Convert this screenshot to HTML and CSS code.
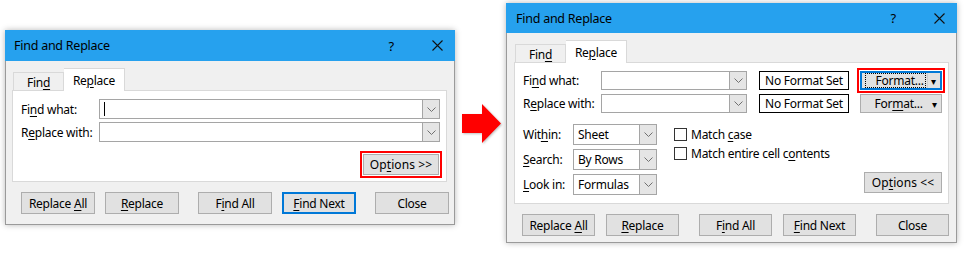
FILE: index.html
```html
<!DOCTYPE html>
<html lang="en">
<head>
    <meta charset="UTF-8">
    <title>Find and Replace</title>
    <link rel="stylesheet" href="styles.css">
</head>
<body>
    <div class="dialog dialog-small">
        <div class="titlebar">
            <span class="title">Find and Replace</span>
            <span class="help">?</span>
            <svg class="close-x" width="11" height="11" viewBox="0 0 11 11"><path d="M0.5 0.5 L10.5 10.5 M10.5 0.5 L0.5 10.5" stroke="#111" stroke-width="1.1" fill="none"/></svg>
        </div>
        <div class="body">
            <div class="tabs">
                <div class="tab">Fin<u>d</u></div>
                <div class="tab active">Re<u>p</u>lace</div>
            </div>
            <div class="panel">
                <div class="field-row">
                    <span class="label">Fi<u>n</u>d what:</span>
                    <div class="combo wide"><span class="caret"></span><span class="drop"><svg width="9" height="5" viewBox="0 0 9 5"><path d="M0.5 0.5 L4.5 4.5 L8.5 0.5" stroke="#707070" fill="none"/></svg></span></div>
                </div>
                <div class="field-row">
                    <span class="label">R<u>e</u>place with:</span>
                    <div class="combo wide"><span class="drop"><svg width="9" height="5" viewBox="0 0 9 5"><path d="M0.5 0.5 L4.5 4.5 L8.5 0.5" stroke="#707070" fill="none"/></svg></span></div>
                </div>
                <div class="options-row">
                    <button class="btn btn-options highlight">Op<u>t</u>ions &gt;&gt;</button>
                </div>
            </div>
            <div class="button-row">
                <button class="btn">Replace <u>A</u>ll</button>
                <button class="btn"><u>R</u>eplace</button>
                <button class="btn gap-wide">F<u>i</u>nd All</button>
                <button class="btn focused"><u>F</u>ind Next</button>
                <button class="btn gap-wide">Close</button>
            </div>
        </div>
    </div>

    <svg class="arrow" width="39" height="39" viewBox="0 0 39 39">
        <polygon points="0,10 20,10 20,0 39,19.5 20,39 20,29 0,29" fill="#ff0000"/>
    </svg>

    <div class="dialog dialog-full">
        <div class="titlebar">
            <span class="title">Find and Replace</span>
            <span class="help">?</span>
            <svg class="close-x" width="11" height="11" viewBox="0 0 11 11"><path d="M0.5 0.5 L10.5 10.5 M10.5 0.5 L0.5 10.5" stroke="#111" stroke-width="1.1" fill="none"/></svg>
        </div>
        <div class="body">
            <div class="tabs">
                <div class="tab">Fin<u>d</u></div>
                <div class="tab active">Re<u>p</u>lace</div>
            </div>
            <div class="panel">
                <div class="field-row">
                    <span class="label">Fi<u>n</u>d what:</span>
                    <div class="combo narrow"><span class="drop"><svg width="9" height="5" viewBox="0 0 9 5"><path d="M0.5 0.5 L4.5 4.5 L8.5 0.5" stroke="#707070" fill="none"/></svg></span></div>
                    <div class="no-format">No Format Set</div>
                    <button class="btn btn-format focused highlight"><span class="format-text"><span class="dotted">Format...</span></span><span class="split"></span><span class="tri">&#9662;</span></button>
                </div>
                <div class="field-row">
                    <span class="label">R<u>e</u>place with:</span>
                    <div class="combo narrow"><span class="drop"><svg width="9" height="5" viewBox="0 0 9 5"><path d="M0.5 0.5 L4.5 4.5 L8.5 0.5" stroke="#707070" fill="none"/></svg></span></div>
                    <div class="no-format">No Format Set</div>
                    <button class="btn btn-format"><span class="format-text">For<u>m</u>at...</span><span class="tri">&#9662;</span></button>
                </div>
                <div class="search-options">
                    <div class="selects">
                        <div class="select-row">
                            <span class="label short">Wit<u>h</u>in:</span>
                            <div class="combo select"><span class="value">Sheet</span><span class="drop"><svg width="9" height="5" viewBox="0 0 9 5"><path d="M0.5 0.5 L4.5 4.5 L8.5 0.5" stroke="#707070" fill="none"/></svg></span></div>
                        </div>
                        <div class="select-row">
                            <span class="label short"><u>S</u>earch:</span>
                            <div class="combo select"><span class="value">By Rows</span><span class="drop"><svg width="9" height="5" viewBox="0 0 9 5"><path d="M0.5 0.5 L4.5 4.5 L8.5 0.5" stroke="#707070" fill="none"/></svg></span></div>
                        </div>
                        <div class="select-row">
                            <span class="label short"><u>L</u>ook in:</span>
                            <div class="combo select"><span class="value">Formulas</span><span class="drop"><svg width="9" height="5" viewBox="0 0 9 5"><path d="M0.5 0.5 L4.5 4.5 L8.5 0.5" stroke="#707070" fill="none"/></svg></span></div>
                        </div>
                    </div>
                    <div class="checks">
                        <label class="check"><span class="box"></span><span>Match <u>c</u>ase</span></label>
                        <label class="check"><span class="box"></span><span>Match entire cell c<u>o</u>ntents</span></label>
                    </div>
                    <div class="options-corner">
                        <button class="btn btn-options">Op<u>t</u>ions &lt;&lt;</button>
                    </div>
                </div>
            </div>
            <div class="button-row">
                <button class="btn">Replace <u>A</u>ll</button>
                <button class="btn"><u>R</u>eplace</button>
                <button class="btn gap-wide">F<u>i</u>nd All</button>
                <button class="btn"><u>F</u>ind Next</button>
                <button class="btn gap-wide">Close</button>
            </div>
        </div>
    </div>
</body>
</html>
```

FILE: styles.css
```css
body {
    margin: 0;
    width: 966px;
    height: 254px;
    background-color: #ffffff;
    display: flex;
    align-items: flex-start;
    font-family: "Noto Sans", "Open Sans", sans-serif;
    font-size: 12px;
    letter-spacing: -0.25px;
    color: #000;
    overflow: hidden;
}
u {
    text-decoration-thickness: 1px;
    text-underline-offset: 2px;
}
.dialog {
    box-sizing: border-box;
    background-color: #f0f0f0;
    border: 1px solid #9a9a9a;
    box-shadow: 0 0 6px rgba(0,0,0,0.28);
    display: flex;
    flex-direction: column;
    flex-shrink: 0;
}
.dialog-small {
    margin: 30px 0 0 5px;
    width: 450px;
    height: 195px;
}
.dialog-full {
    margin: 3px 0 0 5px;
    width: 451px;
    height: 240px;
}
.arrow {
    margin: 104px 0 0 7px;
    flex-shrink: 0;
    filter: drop-shadow(1px 1px 1px rgba(0,0,0,0.25));
}
.titlebar {
    height: 31px;
    margin: -1px -1px 0 -1px;
    background-color: #26a1ee;
    display: flex;
    align-items: center;
    padding: 0 12px 0 9px;
    flex-shrink: 0;
}
.dialog-full .titlebar {
    height: 30px;
    padding-left: 10px;
}
.title {
    flex: 1;
    font-size: 12.5px;
    color: #000;
}
.help {
    font-size: 13px;
    margin-right: 38px;
}
.body {
    padding: 7px 7px 0 6px;
    display: flex;
    flex-direction: column;
}
.dialog-full .body {
    padding-left: 7px;
}
.tabs {
    display: flex;
    align-items: flex-end;
    margin-left: 1px;
    position: relative;
    z-index: 1;
    margin-bottom: -1px;
}
.tab {
    box-sizing: border-box;
    width: 51px;
    height: 19px;
    border: 1px solid #d9d9d9;
    border-bottom: none;
    display: flex;
    align-items: center;
    justify-content: center;
    padding-top: 1px;
}
.tab.active {
    width: 61px;
    height: 23px;
    background-color: #fff;
    border-left: none;
    padding-top: 0;
}
.panel {
    box-sizing: border-box;
    background-color: #fff;
    border: 1px solid #d9d9d9;
    padding: 8px 6px 0 8px;
}
.dialog-small .panel {
    height: 92px;
}
.dialog-full .panel {
    height: 142px;
}
.field-row {
    display: flex;
    align-items: center;
    height: 20px;
    margin-bottom: 3px;
}
.dialog-full .field-row {
    height: 19px;
    margin-bottom: 4px;
}
.label {
    width: 78px;
    flex-shrink: 0;
}
.label.short {
    width: 50px;
}
.combo {
    box-sizing: border-box;
    height: 100%;
    border: 1px solid #a5a5a5;
    background-color: #fff;
    display: flex;
    align-items: center;
    position: relative;
}
.combo.wide {
    flex: 1;
}
.combo.narrow {
    width: 146px;
}
.combo.select {
    width: 84px;
    height: 21px;
}
.combo .value {
    flex: 1;
    padding-left: 4px;
}
.caret {
    position: absolute;
    left: 4px;
    top: 2px;
    width: 1px;
    height: 14px;
    background-color: #000;
}
.drop {
    margin-left: auto;
    box-sizing: border-box;
    width: 17px;
    height: 100%;
    background-color: #e5e5e5;
    border-left: 1px solid #a5a5a5;
    display: flex;
    align-items: center;
    justify-content: center;
}
.no-format {
    box-sizing: border-box;
    width: 90px;
    height: 19px;
    margin-left: 12px;
    border: 1px solid #000;
    display: flex;
    align-items: center;
    justify-content: center;
}
.btn {
    box-sizing: border-box;
    font-family: inherit;
    font-size: 12px;
    letter-spacing: -0.25px;
    color: #000;
    background-color: #e1e1e1;
    border: 1px solid #adadad;
    padding: 0;
    height: 22px;
    width: 74px;
    flex-shrink: 0;
}
.btn.focused {
    border: 2px solid #0078d7;
}
.highlight {
    outline: 2px solid #ff0000;
    outline-offset: 1px;
}
.btn-format {
    width: 82px;
    height: 19px;
    margin-left: 11px;
    display: flex;
    align-items: center;
    padding: 0 4px 0 4px;
}
.btn-format .format-text {
    flex: 1;
    text-align: center;
}
.btn-format .dotted {
    display: block;
    outline: 1px dotted #000;
    line-height: 13px;
    padding-left: 8px;
}
.split {
    width: 1px;
    height: 15px;
    background-color: #cfcfcf;
    margin: 0 3px 0 2px;
}
.tri {
    font-size: 10px;
    line-height: 1;
}
.options-row {
    display: flex;
    justify-content: flex-end;
    margin-top: 12px;
}
.btn-options {
    width: 76px;
    height: 21px;
    letter-spacing: 0.1px;
}
.dialog-small .btn-options {
    margin-right: 1px;
}
.search-options {
    display: flex;
    margin-top: 11px;
}
.selects {
    display: flex;
    flex-direction: column;
    gap: 4px;
}
.select-row {
    display: flex;
    align-items: center;
}
.checks {
    display: flex;
    flex-direction: column;
    margin-left: 17px;
}
.check {
    display: flex;
    align-items: center;
    height: 18px;
    margin-top: 1px;
}
.check .box {
    box-sizing: border-box;
    width: 13px;
    height: 13px;
    border: 1px solid #333;
    background-color: #fff;
    margin-right: 4px;
}
.options-corner {
    flex: 1;
    display: flex;
    justify-content: flex-end;
    align-items: flex-end;
    padding-bottom: 2px;
}
.options-corner .btn-options {
    width: 78px;
}
.button-row {
    display: flex;
    padding: 10px 0 0 9px;
}
.dialog-full .button-row {
    padding: 10px 0 0 8px;
}
.button-row .btn {
    margin-right: 10px;
}
.dialog-full .button-row .btn {
    width: 73px;
    margin-right: 11px;
}
.button-row .gap-wide {
    margin-left: 9px;
}
.button-row .btn:last-child {
    margin-right: 0;
}
```
